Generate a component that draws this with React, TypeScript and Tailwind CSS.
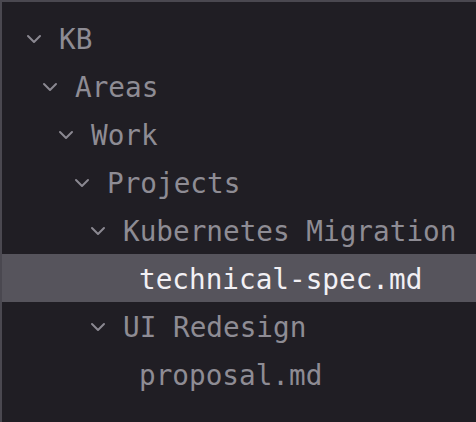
import React from "react";

type Node = { label: string; level: number; folder: boolean; selected?: boolean };

const nodes: Node[] = [
  { label: "KB", level: 0, folder: true },
  { label: "Areas", level: 1, folder: true },
  { label: "Work", level: 2, folder: true },
  { label: "Projects", level: 3, folder: true },
  { label: "Kubernetes Migration", level: 4, folder: true },
  { label: "technical-spec.md", level: 5, folder: false, selected: true },
  { label: "UI Redesign", level: 4, folder: true },
  { label: "proposal.md", level: 5, folder: false },
];

function Chevron() {
  return (
    <svg width="16" height="10" viewBox="0 0 16 10" className="shrink-0">
      <path d="M2 2 L8 8 L14 2" fill="none" stroke="#8a8891" strokeWidth="2" strokeLinecap="round" strokeLinejoin="round" />
    </svg>
  );
}

export default function App() {
  return (
    <div className="w-[476px] h-[422px] bg-[#201e24] border-t-2 border-l-2 border-[#4a4850] pt-3 overflow-hidden font-['DejaVu_Sans_Mono',monospace]">
      {nodes.map((n, i) => (
        <div
          key={i}
          className={`h-12 flex items-center whitespace-nowrap text-[27.7px] ${n.selected ? "bg-[#56545c] text-[#f2f0f4]" : "text-[#8e8c94]"}`}
          style={{ paddingLeft: 24 + n.level * 16 }}
        >
          <div className="w-4 flex justify-center pt-[2px]">{n.folder ? <Chevron /> : null}</div>
          <span className="ml-[17px] leading-none pt-[4px]">{n.label}</span>
        </div>
      ))}
    </div>
  );
}
